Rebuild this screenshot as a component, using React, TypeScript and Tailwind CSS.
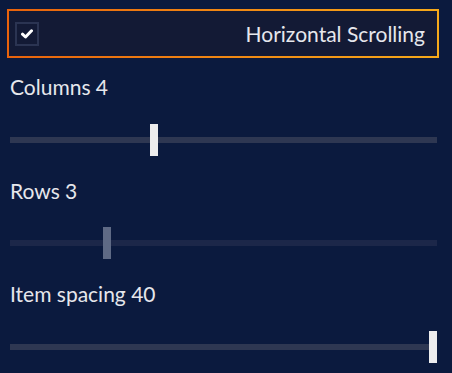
import { useState } from "react";

interface SliderProps {
  value: number;
  min: number;
  max: number;
  disabled?: boolean;
}

function Slider({ value, min, max, disabled }: SliderProps) {
  const pct = (value - min) / (max - min);
  return (
    <div className="relative h-8 mx-[10px] mr-[15px] flex items-center">
      <div className={`h-[6px] w-full ${disabled ? "bg-[#1c2749]" : "bg-[#2e3752]"}`}></div>
      <div
        className={`absolute top-0 h-8 w-2 ${disabled ? "bg-[#5f6a85]" : "bg-[#ededee]"}`}
        style={{ left: `calc((100% - 8px) * ${pct})` }}
      ></div>
    </div>
  );
}

export default function App() {
  const [horizontal, setHorizontal] = useState(true);

  return (
    <div className="w-[452px] h-[373px] bg-[#0b1a3e] pt-[9px] font-['Lato','Liberation_Sans',sans-serif] text-[#e6e7ec] overflow-hidden">
      <div className="ml-[7px] w-[432px] h-[49px] p-[2px] bg-gradient-to-r from-[#e8620c] to-[#f6a91a]">
        <div className="h-full bg-[#131a35] flex items-center pl-[6px] pr-[12px]">
          <button
            onClick={() => setHorizontal(!horizontal)}
            className="w-6 h-6 border-2 border-[#2b3452] flex items-center justify-center"
          >
            {horizontal && (
              <svg width="12" height="10" viewBox="0 0 12 10">
                <path d="M1.5 5.2 L4.5 8 L10.5 1.8" stroke="#ffffff" strokeWidth="3" fill="none" strokeLinecap="round" strokeLinejoin="round" />
              </svg>
            )}
          </button>
          <span className="ml-auto text-[21px] leading-7">Horizontal Scrolling</span>
        </div>
      </div>

      <div className="mt-[15px] px-[10px] text-[21px] leading-7">Columns 4</div>
      <div className="mt-[23px]">
        <Slider value={4} min={1} max={10} />
      </div>

      <div className="mt-[21px] px-[10px] text-[21px] leading-7">Rows 3</div>
      <div className="mt-[22px]">
        <Slider value={3} min={1} max={10} disabled={horizontal} />
      </div>

      <div className="mt-[21px] px-[10px] text-[21px] leading-7">Item spacing 40</div>
      <div className="mt-[23px]">
        <Slider value={40} min={0} max={40} />
      </div>
    </div>
  );
}
